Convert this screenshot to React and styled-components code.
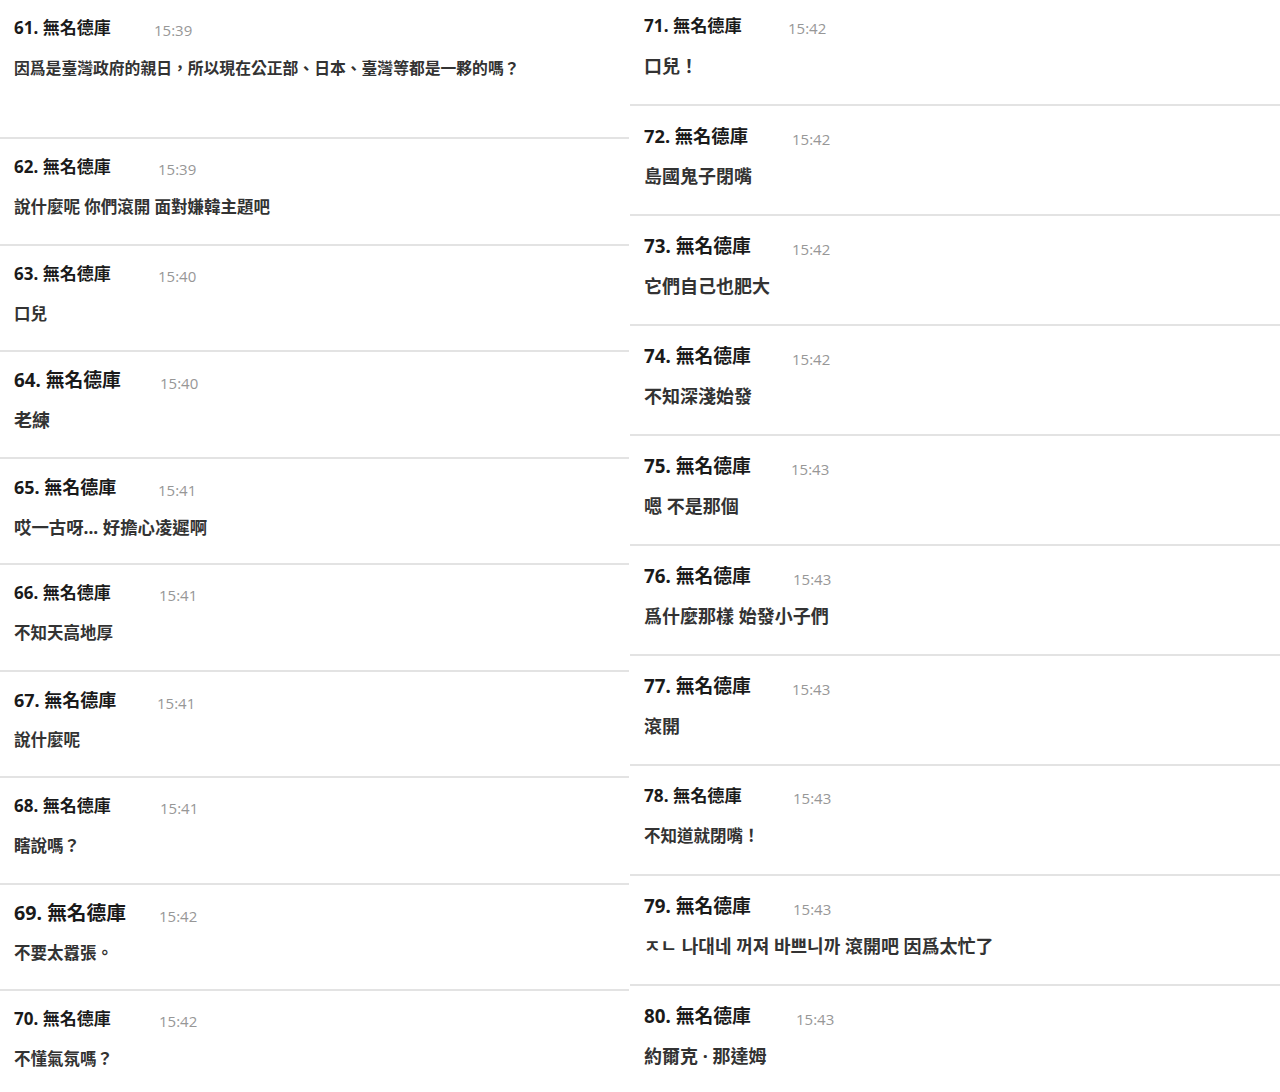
import React from "react";
import styled, { createGlobalStyle } from "styled-components";

const GlobalStyle = createGlobalStyle`
  html, body {
    margin: 0;
    padding: 0;
    background: #ffffff;
  }
  body {
    font-family: "Noto Sans", "Noto Sans CJK TC", "Noto Sans CJK KR", sans-serif;
  }
`;

const Page = styled.div`
  display: grid;
  grid-template-columns: 629px 1fr;
  column-gap: 1px;
  width: 1280px;
  height: 1092px;
  overflow: hidden;
  background: #fff;
`;

const Column = styled.div`
  display: flex;
  flex-direction: column;
`;

const Item = styled.div`
  box-sizing: border-box;
  height: ${props => props.h}px;
  flex: none;
  padding: ${props => props.top}px 0 0 ${props => props.left}px;
  border-bottom: 2px solid #e3e3e3;
  display: flex;
  flex-direction: column;
  gap: ${props => props.gap}px;
`;

const Header = styled.div`
  display: flex;
  align-items: baseline;
  height: 22px;
  line-height: 22px;
`;

const Name = styled.span`
  width: ${props => props.timeAt}px;
  flex: none;
  font-size: ${props => props.size}px;
  font-weight: 700;
  color: #1a1a1a;
  white-space: nowrap;
`;

const Time = styled.span`
  font-family: "Open Sans", "Noto Sans", sans-serif;
  font-size: 15px;
  color: #979797;
  position: relative;
  top: 2px;
`;

const Message = styled.div`
  height: 22px;
  line-height: 22px;
  font-family: "Noto Sans", "Noto Sans CJK TC", "Noto Sans CJK KR", sans-serif;
  font-size: ${props => props.size}px;
  font-weight: 700;
  color: #333333;
  white-space: nowrap;
`;

const left = [
  { n: 61, t: "15:39", m: "因爲是臺灣政府的親日，所以現在公正部、日本、臺灣等都是一夥的嗎？", ns: 17, at: 140, h: 139, ms: 15.8 },
  { n: 62, t: "15:39", m: "說什麼呢 你們滾開 面對嫌韓主題吧", ns: 17, at: 144 },
  { n: 63, t: "15:40", m: "口兒", ns: 17, at: 144 },
  { n: 64, t: "15:40", m: "老練", ns: 18.8, at: 146, ms: 18 },
  { n: 65, t: "15:41", m: "哎一古呀... 好擔心凌遲啊", ns: 18, at: 144, ms: 17.4 },
  { n: 66, t: "15:41", m: "不知天高地厚", ns: 17, at: 145 },
  { n: 67, t: "15:41", m: "說什麼呢", ns: 18, at: 143 },
  { n: 68, t: "15:41", m: "瞎說嗎？", ns: 17, at: 146 },
  { n: 69, t: "15:42", m: "不要太囂張。", ns: 19.7, at: 145 },
  { n: 70, t: "15:42", m: "不懂氣氛嗎？", ns: 17, at: 145 }
];

const right = [
  { n: 71, t: "15:42", m: "口兒！", ns: 17.2, at: 144, h: 106, top: 15 },
  { n: 72, t: "15:42", m: "島國鬼子閉嘴", ns: 18.3, at: 148 },
  { n: 73, t: "15:42", m: "它們自己也肥大", ns: 18.8, at: 148 },
  { n: 74, t: "15:42", m: "不知深淺始發", ns: 18.8, at: 148 },
  { n: 75, t: "15:43", m: "嗯 不是那個", ns: 18.8, at: 147 },
  { n: 76, t: "15:43", m: "爲什麼那樣 始發小子們", ns: 18.8, at: 149 },
  { n: 77, t: "15:43", m: "滾開", ns: 18.8, at: 148 },
  { n: 78, t: "15:43", m: "不知道就閉嘴！", ns: 17.2, at: 149, ms: 16.5 },
  { n: 79, t: "15:43", m: "ㅈㄴ 나대네 꺼져 바쁘니까 滾開吧 因爲太忙了", ns: 18.8, at: 149 },
  { n: 80, t: "15:43", m: "約爾克 · 那達姆", ns: 18.8, at: 152 }
];

function Entry({ data, h, top, gap, pad, ms }) {
  return (
    <Item h={data.h || h} top={data.top || top} gap={gap} left={pad}>
      <Header>
        <Name size={data.ns} timeAt={data.at}>
          {data.n}. 無名德庫
        </Name>
        <Time>{data.t}</Time>
      </Header>
      <Message size={data.ms || ms}>{data.m}</Message>
    </Item>
  );
}

export default function App() {
  return (
    <>
      <GlobalStyle />
      <Page>
        <Column>
          {left.map(d => (
            <Entry key={d.n} data={d} h={106.5} top={17} gap={18} pad={14} ms={16.5} />
          ))}
        </Column>
        <Column>
          {right.map(d => (
            <Entry key={d.n} data={d} h={110} top={19} gap={18} pad={14} ms={18} />
          ))}
        </Column>
      </Page>
    </>
  );
}
